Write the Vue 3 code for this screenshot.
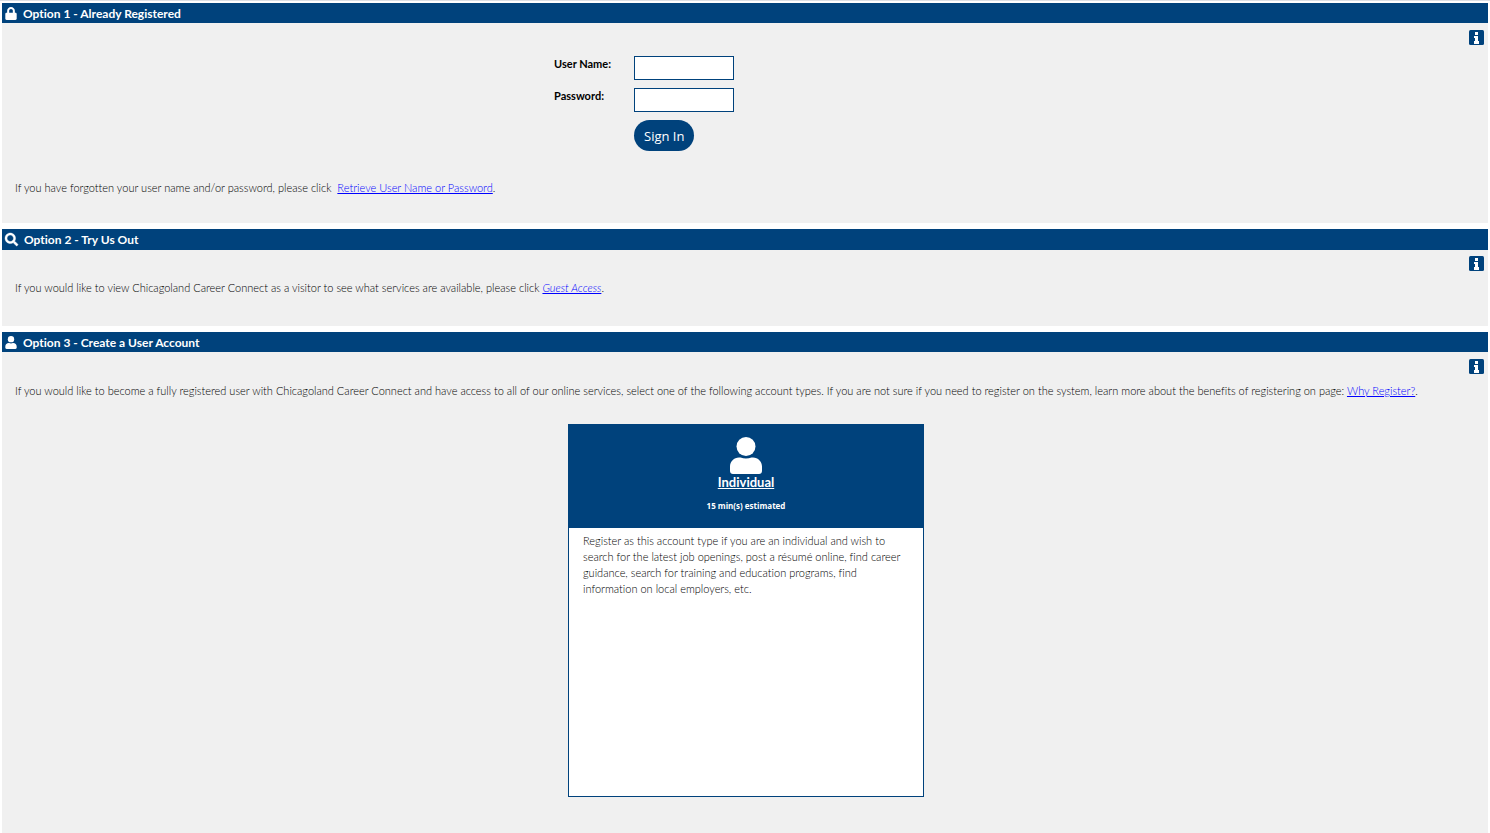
<script setup>
import { ref } from 'vue'

const userName = ref('')
const password = ref('')
</script>

<template>
  <main class="page">
    <section class="option">
      <h2 class="bar">
        <svg class="bar-icon" viewBox="0 0 448 512" aria-hidden="true">
          <path d="M400 224h-24v-72C376 68.200 307.800 0 224 0S72 68.200 72 152v72H48c-26.500 0-48 21.500-48 48v192c0 26.500 21.500 48 48 48h352c26.500 0 48-21.500 48-48V272c0-26.500-21.500-48-48-48zm-104 0H152v-72c0-39.700 32.300-72 72-72s72 32.300 72 72v72z" />
        </svg>
        <span>Option 1 - Already Registered</span>
      </h2>
      <div class="body">
        <button class="info" type="button" aria-label="Information about Option 1">
          <svg viewBox="0 0 15 15" aria-hidden="true">
            <rect width="15" height="15" rx="1.500" />
            <path class="mark" d="M6 2h3v3H6zM5 6h4v5h1v3H5v-3h1V8H5z" />
          </svg>
        </button>
        <form class="login" @submit.prevent>
          <label for="user-name">User Name:</label>
          <input id="user-name" v-model="userName" type="text" autocomplete="username">
          <label for="password">Password:</label>
          <input id="password" v-model="password" type="password" autocomplete="current-password">
          <button class="sign-in" type="submit">Sign In</button>
        </form>
        <p class="note">If you have forgotten your user name and/or password, please click &nbsp;<a href="#retrieve">Retrieve User Name or Password</a>.</p>
      </div>
    </section>

    <section class="option visitor">
      <h2 class="bar">
        <svg class="bar-icon search" viewBox="0 0 512 512" aria-hidden="true">
          <path d="M505 442.700L405.300 343c-4.500-4.500-10.600-7-17-7H372c27.600-35.300 44-79.700 44-128C416 93.100 322.900 0 208 0S0 93.100 0 208s93.100 208 208 208c48.300 0 92.700-16.400 128-44v16.300c0 6.400 2.500 12.500 7 17l99.700 99.700c9.400 9.400 24.600 9.400 33.900 0l28.300-28.300c9.400-9.400 9.400-24.600.1-34zM208 336c-70.700 0-128-57.200-128-128 0-70.700 57.200-128 128-128 70.700 0 128 57.200 128 128 0 70.700-57.200 128-128 128z" />
        </svg>
        <span>Option 2 - Try Us Out</span>
      </h2>
      <div class="body">
        <button class="info" type="button" aria-label="Information about Option 2">
          <svg viewBox="0 0 15 15" aria-hidden="true">
            <rect width="15" height="15" rx="1.500" />
            <path class="mark" d="M6 2h3v3H6zM5 6h4v5h1v3H5v-3h1V8H5z" />
          </svg>
        </button>
        <p class="note">If you would like to view Chicagoland Career Connect as a visitor to see what services are available, please click <a href="#guest"><em>Guest Access</em></a>.</p>
      </div>
    </section>

    <section class="option last">
      <h2 class="bar">
        <svg class="bar-icon" viewBox="0 0 448 512" aria-hidden="true">
          <circle cx="224" cy="125" r="125" />
          <path d="M134 278h14c48 20 104 20 152 0h14c74 0 134 60 134 134v52c0 26-22 48-48 48H48c-26 0-48-22-48-48v-52c0-74 60-134 134-134z" />
        </svg>
        <span>Option 3 - Create a User Account</span>
      </h2>
      <div class="body">
        <button class="info" type="button" aria-label="Information about Option 3">
          <svg viewBox="0 0 15 15" aria-hidden="true">
            <rect width="15" height="15" rx="1.500" />
            <path class="mark" d="M6 2h3v3H6zM5 6h4v5h1v3H5v-3h1V8H5z" />
          </svg>
        </button>
        <p class="note">If you would like to become a fully registered user with Chicagoland Career Connect and have access to all of our online services, select one of the following account types. If you are not sure if you need to register on the system, learn more about the benefits of registering on page: <a href="#why">Why Register?</a>.</p>
        <article class="card">
          <header class="card-head">
            <svg class="person" viewBox="0 0 32 37" aria-hidden="true">
              <circle cx="16" cy="9.500" r="9.500" />
              <path d="M9 20.500h1.500c3.500 1.400 7.500 1.400 11 0H23c5 0 9 4 9 9V34c0 1.700-1.300 3-3 3H3c-1.700 0-3-1.300-3-3v-4.500c0-5 4-9 9-9z" />
            </svg>
            <a class="card-title" href="#individual">Individual</a>
            <p class="estimate">15 min(s) estimated</p>
          </header>
          <p class="card-text">Register as this account type if you are an individual and wish to search for the latest job openings, post a résumé online, find career guidance, search for training and education programs, find information on local employers, etc.</p>
        </article>
      </div>
    </section>
  </main>
</template>

<style>
body {
  background: #fff;
}
</style>

<style scoped>
.page {
  display: flex;
  flex-direction: column;
  gap: 6px;
  box-sizing: border-box;
  min-height: 100vh;
  padding: 2px 2px 0;
  border-top: 1px solid #dcdfe5;
  font-family: Lato, "Open Sans", sans-serif;
  font-variant-ligatures: none;
  font-size: 11px;
  line-height: 16px;
  color: #000;
}

.option {
  display: flex;
  flex-direction: column;
}

.last {
  flex: 1;
}

.bar {
  display: flex;
  align-items: center;
  gap: 6px;
  box-sizing: border-box;
  height: 20px;
  margin: 0;
  padding: 2px 3px 0;
  background: #00427c;
  color: #fff;
  font-size: 12px;
  line-height: 18px;
  font-weight: 700;
}

.bar-icon {
  width: 12px;
  height: 13px;
  margin-bottom: 1px;
  fill: #fff;
}

.search {
  width: 13px;
  overflow: visible;
  stroke: #fff;
  stroke-width: 16px;
}

.body {
  display: flow-root;
  flex: 1;
  padding: 7px 11px 27px 13px;
  background: #f0f0f0;
}

.visitor .bar {
  height: 21px;
  padding: 1px 3px;
}

.visitor .body {
  padding: 6px 11px 30px 13px;
}

.last .body {
  padding-bottom: 36px;
}

.info {
  display: block;
  width: 15px;
  height: 15px;
  margin: 0 -7px 0 auto;
  padding: 0;
  border: 0;
  background: none;
  cursor: pointer;
}

.info svg {
  display: block;
  fill: #00427c;
}

.info .mark {
  fill: #fff;
}

.login {
  display: grid;
  grid-template-columns: 80px 100px;
  gap: 8px 0;
  width: 384px;
  margin: 11px auto 0;
}

.login label {
  font-weight: 700;
}

.login input {
  box-sizing: border-box;
  width: 100px;
  height: 24px;
  padding: 2px 4px;
  border: 1px solid #00427c;
  background: #fff;
  font: inherit;
}

.sign-in {
  grid-column: 2;
  justify-self: start;
  height: 31px;
  padding: 0 10px;
  border: 0;
  border-radius: 16px;
  background: #00427c;
  color: #fff;
  font-family: "Open Sans", sans-serif;
  font-size: 13px;
}

.note {
  margin: 9px 0 0;
  font-weight: 300;
}

.login + .note {
  margin-top: 29px;
}

a {
  color: #00f;
  text-decoration: underline;
}

.card {
  box-sizing: border-box;
  width: 356px;
  min-height: 373px;
  margin: 25px auto 0;
  border: 1px solid #00427c;
  background: #fff;
}

.card-head {
  display: flex;
  flex-direction: column;
  align-items: center;
  padding: 12px 0 14px;
  background: #00427c;
  color: #fff;
}

.person {
  width: 32px;
  height: 37px;
  fill: #fff;
}

.card-title {
  color: #fff;
  font-size: 13px;
  font-weight: 700;
}

.estimate {
  margin: 8px 0 0;
  font-family: "Open Sans", sans-serif;
  font-size: 8px;
  font-weight: 700;
}

.card-text {
  margin: 0;
  padding: 5px 14px;
  font-weight: 300;
}
</style>
